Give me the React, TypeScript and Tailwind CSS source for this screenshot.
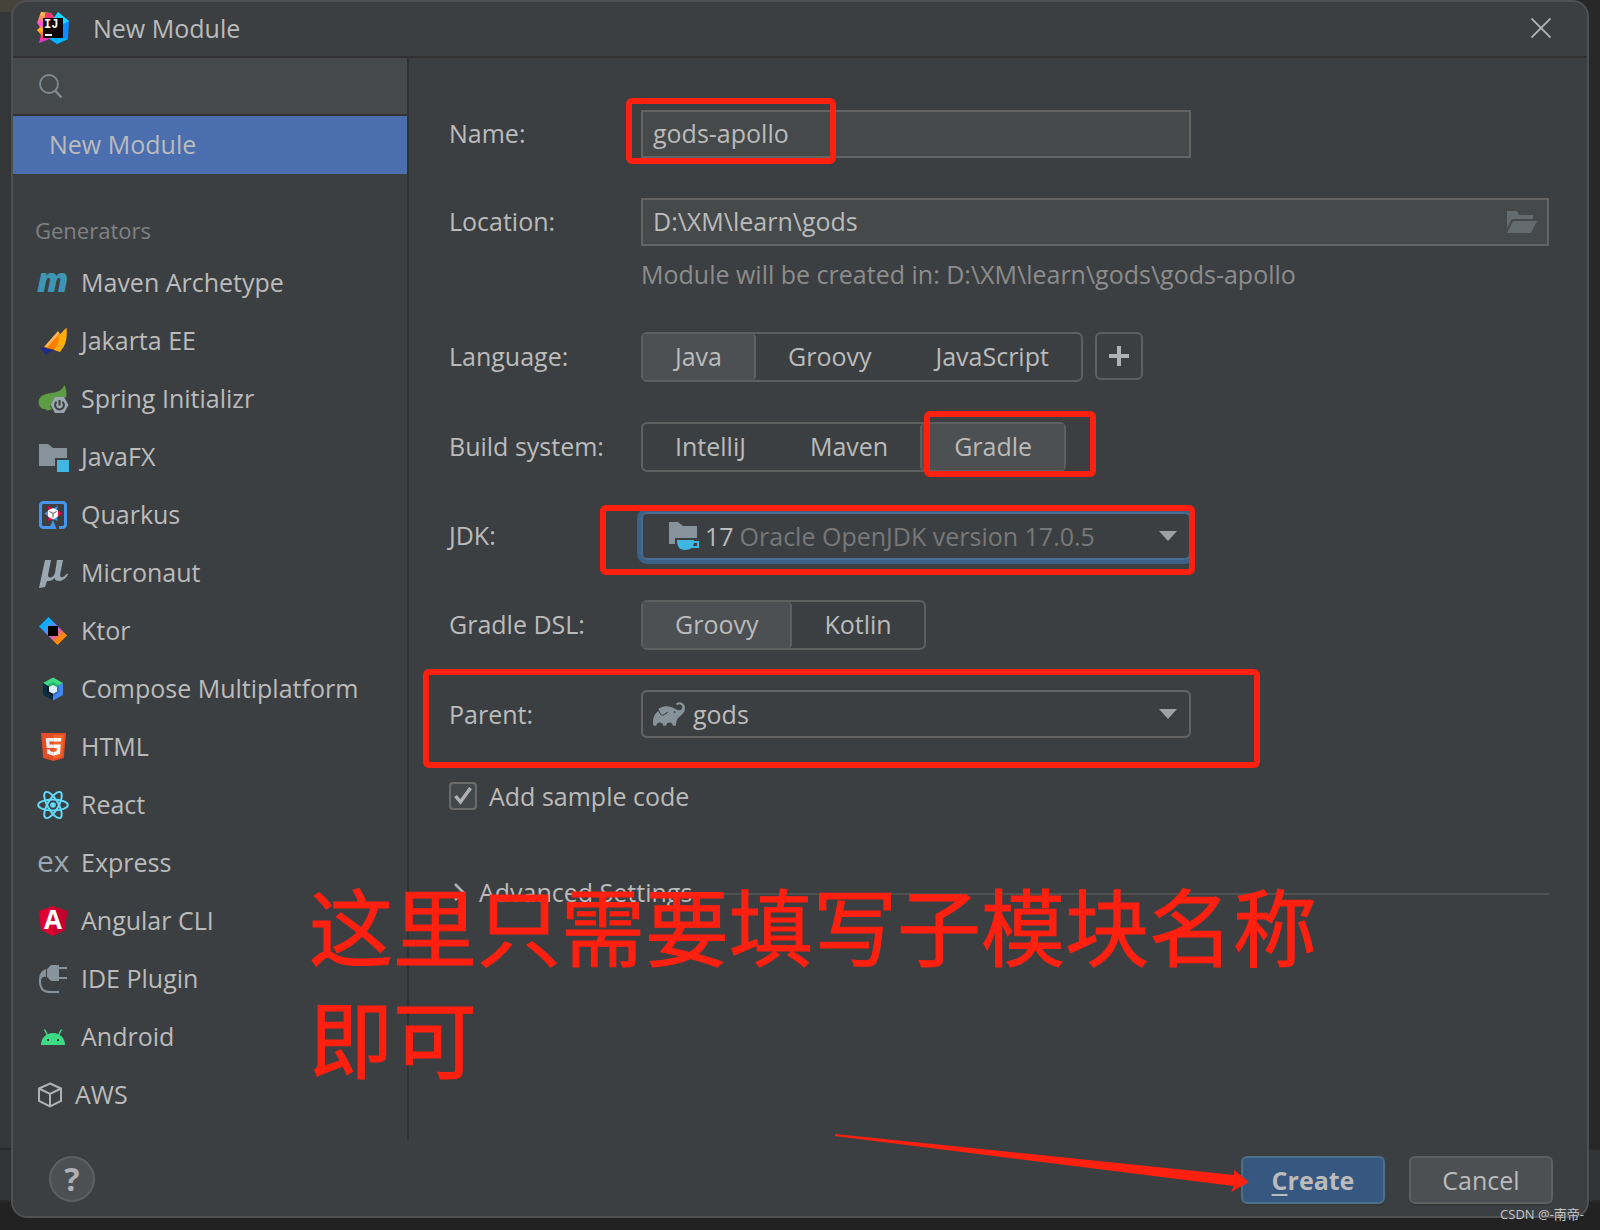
import { useState } from "react";
import type { ReactNode } from "react";
import clsx from "clsx";
import { SiGradle } from "react-icons/si";

interface Generator {
    name: string;
    icon: ReactNode;
}

const MavenIcon = () => (
    <svg viewBox="0 0 32 32" className="size-8 overflow-visible">
        <text x="0" y="25" fontFamily="Open Sans" fontSize="34" fontWeight="800" fontStyle="italic" fill="#3e96b5">m</text>
    </svg>
);

const JakartaIcon = () => (
    <svg viewBox="0 0 32 32" className="size-8">
        <path d="M7 22 21 6 23 9 18 24Z" fill="#ffb454" />
        <path d="M9.500 23 23 8 24 12 19 25Z" fill="#ff7f00" />
        <path d="M29.500 2.500C30.500 13 29 20 23 27L17 25C22 20 22 14 21.500 11Z" fill="#ffad0d" />
        <path d="M2 22 18 25.500 13 26.500 9 30Q6 25 2 22Z" fill="#1b2a8c" />
    </svg>
);

const SpringIcon = () => (
    <svg viewBox="0 0 32 32" className="size-8">
        <path d="M27.500 2C29.500 7 30 11 29 14.500H18L13 23 15 26.500 8 28Q13 26.500 6 26C1 24 0 17 4 13.500C10 8 22 13 27.500 2Z" fill="#5d9b45" />
        <path d="M18 14H27L31.500 22 27 30H18L13.500 22Z" fill="#9aa7b0" />
        <path d="M19.600 18.800A4.400 4.400 0 1 0 25.400 18.800M22.500 17V22.500" stroke="#3c3f41" strokeWidth="2" fill="none" />
    </svg>
);

const JavaFxIcon = () => (
    <svg viewBox="0 0 32 32" className="size-8">
        <path d="M2 3H11L16 7H30V17H18V25H2Z" fill="#87939a" />
        <path d="M20 19H32V31H20Z" fill="#40b6e0" />
    </svg>
);

const QuarkusIcon = () => (
    <svg viewBox="0 0 32 32" className="size-8">
        <path d="M14 28.500H6A3 3 0 0 1 3.500 26V6A3 3 0 0 1 6 3.500H26A3 3 0 0 1 28.500 6V26A3 3 0 0 1 26 28.500H22" stroke="#4695eb" strokeWidth="3" fill="none" />
        <path d="M16 21 19.500 30H12Z" fill="#4695eb" />
        <path d="M11 7 16 10 12 14ZM11 22 12 17 16 20ZM25 14.500 20 18V11Z" fill="#ff004a" />
        <path d="M20.500 7 16 10 20 13ZM20.500 22 16 20 20 17ZM7.500 14.500 12 11V18Z" fill="#4695eb" />
        <path d="M16 9 21 11.500V17.500L16 20.500 11 17.500V11.500Z" fill="#fff" />
        <path d="M12.500 12.500 16 14.500 19.500 12.500M16 14.500V18.500" stroke="#555" strokeWidth="1" fill="none" />
    </svg>
);

const MicronautIcon = () => (
    <svg viewBox="0 0 32 32" className="size-8">
        <path d="M8 3H14L11 18Q11 21 14 20.500Q17 19.500 18 16L20 3H26L23 18Q23 21 26 20Q28 19 30 16.500L31 17.500Q27.500 24 22 24Q18 24 17.500 21Q15 24.500 10 24L8 30 2 31Z" fill="#9aa7b0" />
    </svg>
);

const KtorIcon = () => (
    <svg viewBox="0 0 32 32" className="size-8">
        <defs>
            <linearGradient id="ktor" x1="0" y1="0" x2="1" y2="1">
                <stop offset=".25" stopColor="#0ab0ff" />
                <stop offset=".42" stopColor="#5a8bff" />
                <stop offset=".58" stopColor="#d65bc0" />
                <stop offset=".75" stopColor="#ff8a00" />
            </linearGradient>
        </defs>
        <path d="M2 11.500 11.500 2 30 20.500 20.500 30Z" fill="url(#ktor)" />
        <path d="M11 11H21V21H11Z" fill="#000" />
    </svg>
);

const ComposeIcon = () => (
    <svg viewBox="0 0 32 32" className="size-8">
        <path d="M16 4.500 26 10 16 16 6 10Z" fill="#3ddc84" />
        <path d="M6 10 16 16V27.500L6 22Z" fill="#083042" />
        <path d="M26 10 16 16V27.500L26 22Z" fill="#4285f4" />
        <path d="M16 9 22 12.500 16 16 10 12.500Z" fill="#2ab267" />
        <path d="M10 12.500 16 16V23L10 19.500Z" fill="#04141c" />
        <path d="M22 12.500 16 16V23L22 19.500Z" fill="#3870b2" />
        <path d="M16 12 20 14V18.500L16 20.800 12 18.500V14Z" fill="#d7effe" />
    </svg>
);

const HtmlIcon = () => (
    <svg viewBox="0 0 32 32" className="size-8">
        <path d="M4 2H29L26.800 27 16.500 30 6.200 27Z" fill="#e44d26" />
        <path d="M16.500 4H26.800L25 25.500 16.500 28Z" fill="#f16529" />
        <path d="M16.500 7V10.500H12.300L12.600 13.500H16.500V17H9.600L8.700 7ZM16.500 21V24.700L10.200 22.800 9.900 18.500H13.200L13.400 20.200Z" fill="#ebebeb" />
        <path d="M16.500 7H24.300L24 10.500H16.500ZM16.500 13.500H23.700L22.900 22.800 16.500 24.700V21L19.600 20.200 19.900 17H16.500Z" fill="#fff" />
    </svg>
);

const ReactIcon = () => (
    <svg viewBox="0 0 32 32" className="size-8" fill="none" stroke="#61dafb" strokeWidth="2">
        <ellipse cx="16" cy="16" rx="14.800" ry="5.400" />
        <ellipse cx="16" cy="16" rx="14.800" ry="5.400" transform="rotate(60 16 16)" />
        <ellipse cx="16" cy="16" rx="14.800" ry="5.400" transform="rotate(120 16 16)" />
        <circle cx="16" cy="16" r="2.800" fill="#61dafb" stroke="none" />
    </svg>
);

const ExpressIcon = () => (
    <svg viewBox="0 0 32 32" className="size-8 overflow-visible">
        <text x="0" y="25" fontFamily="Open Sans" fontSize="30" fill="#9aa7b0">ex</text>
    </svg>
);

const AngularIcon = () => (
    <svg viewBox="0 0 32 32" className="size-8 overflow-visible">
        <path d="M16 1 30 6 28 25 16 31 4 25 2 6Z" fill="#dd0031" />
        <path d="M16 1 30 6 28 25 16 31Z" fill="#c3002f" />
        <text x="16" y="23.500" textAnchor="middle" fontFamily="Open Sans" fontSize="26" fontWeight="700" fill="#fff">A</text>
    </svg>
);

const PluginIcon = () => (
    <svg viewBox="0 0 32 32" className="size-8">
        <path d="M14 2H22V18H14L10 14V6ZM22 4H30V6H22ZM22 14H30V16H22Z" fill="#87939a" />
        <path d="M9 6V14Q4 13 4 18.500C4 25 7 28 13 28H22V30H12C5 30 2 25 2 18C2 11 4 8 9 6Z" fill="#87939a" />
    </svg>
);

const AndroidIcon = () => (
    <svg viewBox="0 0 32 32" className="size-8">
        <path d="M4 24C4 17 9 12 16 12S28 17 28 24Z" fill="#3ddc84" />
        <path d="M7.500 8.500 10.500 14M24.500 8.500 21.500 14" stroke="#3ddc84" strokeWidth="1.500" />
        <path d="M10 18H12V20H10ZM20 18H22V20H20Z" fill="#3c3f41" />
    </svg>
);

const AwsIcon = () => (
    <svg viewBox="0 0 26 32" className="h-8 w-[26px]" fill="none" stroke="#afb1b3" strokeWidth="2">
        <path d="M13 4.500 24 9.500V22L13 27.500 2 22V9.500ZM2 9.500 13 15 24 9.500M13 15V27.500" />
    </svg>
);

const generators: Generator[] = [
    { name: "Maven Archetype", icon: <MavenIcon /> },
    { name: "Jakarta EE", icon: <JakartaIcon /> },
    { name: "Spring Initializr", icon: <SpringIcon /> },
    { name: "JavaFX", icon: <JavaFxIcon /> },
    { name: "Quarkus", icon: <QuarkusIcon /> },
    { name: "Micronaut", icon: <MicronautIcon /> },
    { name: "Ktor", icon: <KtorIcon /> },
    { name: "Compose Multiplatform", icon: <ComposeIcon /> },
    { name: "HTML", icon: <HtmlIcon /> },
    { name: "React", icon: <ReactIcon /> },
    { name: "Express", icon: <ExpressIcon /> },
    { name: "Angular CLI", icon: <AngularIcon /> },
    { name: "IDE Plugin", icon: <PluginIcon /> },
    { name: "Android", icon: <AndroidIcon /> },
    { name: "AWS", icon: <AwsIcon /> },
];

const IdeaLogo = () => (
    <svg viewBox="0 0 32 34" className="h-[34px] w-8">
        <defs>
            <linearGradient id="ideaLeft" x1="0" y1="0" x2="0" y2="1">
                <stop offset="0" stopColor="#ffd04d" />
                <stop offset=".2" stopColor="#ff8a5c" />
                <stop offset=".4" stopColor="#ff45ed" />
                <stop offset=".58" stopColor="#ffbf00" />
                <stop offset=".8" stopColor="#ff3a6e" />
                <stop offset="1" stopColor="#c736ff" />
            </linearGradient>
        </defs>
        <path d="M4 1 14 2 18 8 17 25 10 29 2 32 4 24 0 19 3 16 0 12Z" fill="url(#ideaLeft)" />
        <path d="M8 2 14 2 18 9H8Z" fill="#ff3175" />
        <path d="M21 1 32 10 31 28 20 33 12 28 18 8Z" fill="#0d8bff" />
        <path d="M21 1 32 10 26 13 16 8Z" fill="#1fd3ff" />
        <path d="M12 27H26L31 28 20 33Z" fill="#00b2ff" />
        <path d="M6 7H26V27H6Z" fill="#0d0508" />
        <path d="M8 23H15V25H8Z" fill="#fff" />
        <text x="7" y="17" fontFamily="Liberation Mono" fontSize="12" fontWeight="700" fill="#fff">IJ</text>
    </svg>
);

const Arrow = () => <span className="mr-3 size-0 border-x-9 border-t-10 border-x-transparent border-t-[#9fa2a4]" />;

// Red frame drawn over a form control
const Mark = ({ className }: { className: string }) => (
    <div className={clsx("pointer-events-none absolute rounded-md border-6 border-[#ff2010]", className)} />
);

interface SegmentedProps {
    label: string;
    options: string[];
    initial: string;
}

const Segmented = ({ label, options, initial }: SegmentedProps) => {
    const [value, setValue] = useState(initial);

    return (
        <div role="group" aria-label={label} className="flex h-[50px] rounded-md border-2 border-[#5e6060]">
            {options.map((option, index) => (
                <button
                    key={option}
                    type="button"
                    aria-pressed={option === value}
                    onClick={() => setValue(option)}
                    className={clsx(
                        "px-8 pb-0.5",
                        option === value && "bg-[#4c5052]",
                        option === value && index < options.length - 1 && "rounded-r-sm border-r-2 border-[#5e6060]",
                        option === value && index > 0 && "rounded-l-sm border-l-2 border-[#5e6060]",
                    )}
                >
                    {option}
                </button>
            ))}
        </div>
    );
};

const Sidebar = () => (
    <aside className="w-[396px] shrink-0 border-r-2 border-[#323232] pb-[17px]">
        <label className="flex h-14 items-center bg-[#45494a] pl-[26px]">
            <svg viewBox="0 0 24 26" className="h-[26px] w-6" fill="none" stroke="#7f8b91">
                <circle cx="10" cy="11" r="9" strokeWidth="1.800" />
                <path d="m16 17.500 6.500 7" strokeWidth="2.500" />
            </svg>
            <input type="search" aria-label="Search" className="ml-3 min-w-0 flex-1 bg-transparent outline-none" />
        </label>
        <button type="button" className="flex h-[60px] w-full items-center border-t-2 border-[#323232] bg-[#4b6eaf] pb-0.5 pl-9">
            New Module
        </button>
        <h2 className="mt-10 mb-2 h-8 pl-[22px] text-[22px] text-[#808182]">Generators</h2>
        <ul>
            {generators.map((generator) => (
                <li key={generator.name}>
                    <button type="button" className="flex h-[58px] w-full items-center gap-3 pl-6">
                        {generator.icon}
                        <span className="pb-0.5">{generator.name}</span>
                    </button>
                </li>
            ))}
        </ul>
    </aside>
);

const ModuleForm = () => {
    const [name, setName] = useState("gods-apollo");
    const [location, setLocation] = useState("D:\\XM\\learn\\gods");
    const [sample, setSample] = useState(true);

    return (
        <form className="flex min-w-0 flex-1 flex-col gap-10 pt-13 pr-[38px] pl-10">
            <div className="relative flex items-center">
                <label htmlFor="name" className="w-48 pb-0.5">Name:</label>
                <input
                    id="name"
                    value={name}
                    onChange={(e) => setName(e.target.value)}
                    className="h-12 w-[550px] border-2 border-[#646464] bg-[#45494a] px-2.5 pb-0.5 outline-none"
                />
                <Mark className="-top-3 left-[177px] h-[66px] w-[210px]" />
            </div>

            <div>
                <div className="flex items-center">
                    <label htmlFor="location" className="w-48 pb-0.5">Location:</label>
                    <div className="flex h-12 flex-1 items-center border-2 border-[#646464] bg-[#45494a] pr-2.5 pl-2.5">
                        <input
                            id="location"
                            value={location}
                            onChange={(e) => setLocation(e.target.value)}
                            className="min-w-0 flex-1 bg-transparent pb-0.5 outline-none"
                        />
                        <button type="button" aria-label="Browse">
                            <svg viewBox="0 0 30 22" className="h-[22px] w-[30px]" fill="#636b6f">
                                <path d="M0 0H10L12 4H26V8H5L0 17Z" />
                                <path d="M6 10H30L24 22H0Z" />
                            </svg>
                        </button>
                    </div>
                </div>
                <p className="mt-3 ml-48 h-[34px] text-[#8c8c8c]">Module will be created in: D:\XM\learn\gods\gods-apollo</p>
            </div>

            <div className="flex items-center">
                <span className="w-48 pb-0.5">Language:</span>
                <Segmented label="Language" options={["Java", "Groovy", "JavaScript"]} initial="Java" />
                <button
                    type="button"
                    aria-label="Add language"
                    className="ml-3 flex size-12 items-center justify-center self-start rounded-md border-2 border-[#5e6060]"
                >
                    <svg viewBox="0 0 20 20" className="size-5" fill="#afb1b3">
                        <path d="M8 0H12V8H20V12H12V20H8V12H0V8H8Z" />
                    </svg>
                </button>
            </div>

            <div className="flex items-center">
                <span className="w-48 pb-0.5">Build system:</span>
                <div className="relative">
                    <Segmented label="Build system" options={["IntelliJ", "Maven", "Gradle"]} initial="Gradle" />
                    <Mark className="-top-[11px] -right-[30px] h-[66px] w-[172px]" />
                </div>
            </div>

            <div className="relative flex items-center">
                <label htmlFor="jdk" className="w-48 pb-0.5">JDK:</label>
                <div className="flex h-12 w-[550px] items-center rounded-md border-2 border-[#466d94] pl-6 ring-4 ring-[#3d6185]">
                    <svg viewBox="0 0 32 30" className="mr-1.5 h-[30px] w-8 shrink-0">
                        <path d="M2 1H11L16 5H30V17H8V23H2Z" fill="#87939a" />
                        <path d="M10 19H27V20H32V27H25Q22 29 18 29C12 29 10 25 10 19Z" fill="#40b6e0" />
                        <path d="M27 22H30V25H26Z" fill="#3c3f41" />
                    </svg>
                    <span>17</span>
                    <select id="jdk" className="min-w-0 flex-1 appearance-none bg-transparent pl-1.5 text-[#787878] outline-none">
                        <option>Oracle OpenJDK version 17.0.5</option>
                    </select>
                    <Arrow />
                </div>
                <Mark className="-top-[7px] left-[151px] h-[70px] w-[595px]" />
            </div>

            <div className="flex items-center">
                <span className="w-48 pb-0.5">Gradle DSL:</span>
                <Segmented label="Gradle DSL" options={["Groovy", "Kotlin"]} initial="Groovy" />
            </div>

            <div className="relative flex items-center">
                <label htmlFor="parent" className="w-48">Parent:</label>
                <div className="flex h-12 w-[550px] items-center rounded-md border-2 border-[#646464] pl-2.5">
                    <SiGradle className="size-8 shrink-0 text-[#87939a]" />
                    <select id="parent" className="min-w-0 flex-1 appearance-none bg-transparent pl-2 outline-none">
                        <option>gods</option>
                    </select>
                    <Arrow />
                </div>
                <Mark className="-top-[21px] -left-[26px] h-[99px] w-[837px]" />
            </div>

            <label className="flex h-9 items-center gap-3">
                <span className="relative flex size-7">
                    <input
                        type="checkbox"
                        checked={sample}
                        onChange={(e) => setSample(e.target.checked)}
                        className="size-7 appearance-none rounded-sm border-2 border-[#6b6b6b] bg-[#43494a]"
                    />
                    {sample && (
                        <svg viewBox="0 0 28 28" className="pointer-events-none absolute inset-0" fill="none" stroke="#afb1b3" strokeWidth="3.500">
                            <path d="m6.500 14 5 6L21.500 6" />
                        </svg>
                    )}
                </span>
                Add sample code
            </label>

            <div className="mt-5 flex h-9 items-center">
                <button type="button" className="flex items-center">
                    <svg viewBox="0 0 30 20" className="h-5 w-[30px]" fill="none" stroke="#afb1b3" strokeWidth="2.500">
                        <path d="m6 2 8 8-8 8" />
                    </svg>
                    Advanced Settings
                </button>
                <div className="mt-1 ml-1 h-0.5 flex-1 bg-[#515151]" />
            </div>
        </form>
    );
};

const Footer = () => (
    <footer className="flex items-start gap-6 px-[34px] pt-[15px] pb-3 pl-9">
        <button
            type="button"
            aria-label="Help"
            className="mr-auto size-[46px] rounded-full border-2 border-[#5e6060] bg-[#4c5052] text-[32px] leading-10 font-bold text-[#afb1b3]"
        >
            ?
        </button>
        <div className="relative">
            <button type="submit" className="h-12 w-36 rounded-md border-2 border-[#4c708c] bg-[#365880] font-bold shadow-[0_2px_0_#36393a]">
                <span className="underline decoration-2 underline-offset-4">C</span>reate
            </button>
            <svg viewBox="0 0 416 60" className="pointer-events-none absolute -top-[22px] right-[135px] h-[60px] w-[416px]" fill="#ff2010">
                <path d="M1 0 400 41 400 36 415 48 397 58 400 52 1 2Z" />
            </svg>
        </div>
        <button type="button" className="h-12 w-36 rounded-md border-2 border-[#5e6060] bg-[#4c5052] shadow-[0_2px_0_#36393a]">
            Cancel
        </button>
    </footer>
);

// Editor window that shows through at the edges of the dialog
const Backdrop = () => (
    <div aria-hidden="true" className="absolute inset-0 flex flex-col overflow-hidden">
        <div className="flex flex-1 justify-between">
            <div className="w-1/2 border-t-12 border-[#45433a] bg-[#343738]" />
            <div className="w-1/2 bg-[#272727]" />
        </div>
        <div className="h-[54px] border-y-2 border-[#2a2a2a] bg-[#323334]" />
        <div className="h-7 bg-[#222222]" />
    </div>
);

export default function App() {
    return (
        <div className="relative min-h-screen bg-[#222222] px-[11px] pb-3 font-['Open_Sans','Noto_Sans_CJK_SC',sans-serif] text-[25px] leading-8 text-[#bbbbbb]">
            <Backdrop />
            <div role="dialog" aria-labelledby="title" className="relative rounded-2xl border-2 border-[#4d4f50] bg-[#3c3f41]">
                <header className="flex h-14 items-center border-b-2 border-[#323232] pr-9 pb-0.5 pl-6">
                    <IdeaLogo />
                    <h1 id="title" className="ml-6 flex-1">New Module</h1>
                    <button type="button" aria-label="Close">
                        <svg viewBox="0 0 20 20" className="size-5" stroke="#b4b5b6" strokeWidth="1.800">
                            <path d="M.5.5 19.500 19.500M19.500.5.5 19.500" />
                        </svg>
                    </button>
                </header>
                <div className="flex">
                    <Sidebar />
                    <ModuleForm />
                </div>
                <Footer />
                <p className="pointer-events-none absolute top-[870px] left-[296px] w-[1010px] text-[84px] leading-[112px] text-[#ff2010] [-webkit-text-stroke:1px_#ff2010]">
                    这里只需要填写子模块名称即可
                </p>
            </div>
            <span className="absolute right-4 bottom-1 text-[13px] leading-6 text-[#c8c8c8]">CSDN @-南帝-</span>
        </div>
    );
}
